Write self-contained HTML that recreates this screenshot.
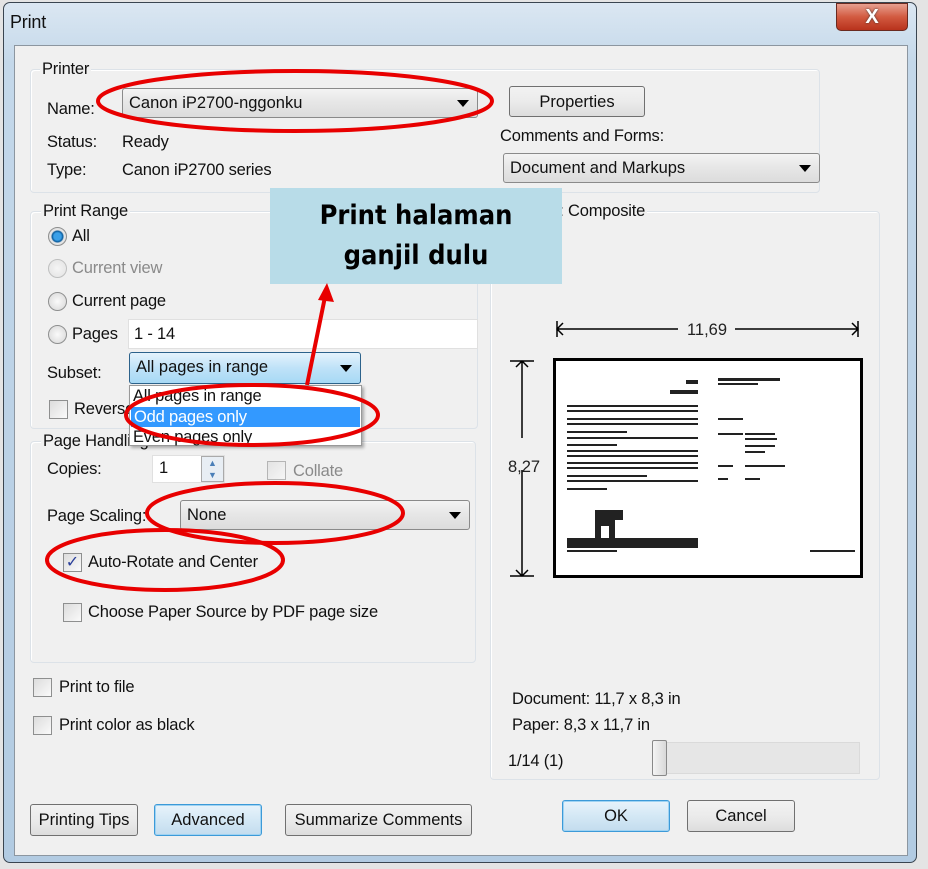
<!DOCTYPE html>
<html><head><meta charset="utf-8"><style>
*{box-sizing:border-box}
body{margin:0;width:928px;height:869px;overflow:hidden;background:#e4e4e4;font-family:"Liberation Sans",sans-serif;font-size:16px;color:#111;position:relative}
.a{position:absolute}
.frame{left:3px;top:2px;width:914px;height:861px;border:1px solid #3a4550;border-radius:7px;background:linear-gradient(#dbe7f2,#c4d8ea 60px,#b2cbe2);}
.bodyp{left:14px;top:45px;width:894px;height:811px;background:#f0f0f0;border:1px solid #8c96a0}
.grp{border:1px solid #dce2e8;border-radius:4px;box-shadow:inset 1px 1px 0 #fff}
.lbl{background:#f0f0f0;padding:0 2px}
.dd{border:1px solid #8a8a8a;border-radius:3px;background:linear-gradient(#f4f4f4,#e6e6e6 50%,#dcdcdc);padding:5px 6px;font-size:16.5px}
.dd:after{content:"";position:absolute;right:8px;top:50%;margin-top:-3px;border:6px solid transparent;border-top:7px solid #000;border-bottom:0}
.btn{border:1px solid #707070;border-radius:3px;background:linear-gradient(#f2f2f2,#ebebeb 50%,#dddddd);text-align:center;font-size:16.5px;line-height:30px}
.btnb{border:1px solid #3c9ad8;border-radius:3px;background:linear-gradient(#e8f3fb,#d4e8f5 50%,#c3dcee);text-align:center;font-size:16.5px;line-height:30px;box-shadow:inset 0 0 0 1px #9fd3f3}
.cb{width:19px;height:19px;border:1px solid #8e8f8f;background:linear-gradient(135deg,#dcdcdc,#fafafa)}
.rd{width:19px;height:19px;border:1px solid #8e8f8f;border-radius:50%;background:radial-gradient(#fafafa,#d6d6d6)}
.t{font-size:16.5px;white-space:nowrap;letter-spacing:-0.2px}
</style></head><body>
<div class="a frame"></div>
<div class="a t" style="left:10px;top:12px;font-size:18px">Print</div>
<div class="a" style="left:836px;top:3px;width:72px;height:28px;border:1px solid #6a2a20;border-radius:0 0 5px 5px;background:linear-gradient(#e8a090,#d25a40 50%,#b8321c);color:#fff;font-weight:bold;font-size:20px;text-align:center;line-height:26px;text-shadow:0 0 2px #333">X</div>
<div class="a bodyp"></div>

<div class="a grp" style="left:30px;top:69px;width:790px;height:124px"></div>
<div class="a t lbl" style="left:40px;top:60px">Printer</div>
<div class="a t" style="left:47px;top:100px">Name:</div>
<div class="a dd" style="left:122px;top:88px;width:356px;height:30px">Canon iP2700-nggonku</div>
<div class="a t" style="left:47px;top:133px">Status:</div><div class="a t" style="left:122px;top:133px">Ready</div>
<div class="a t" style="left:47px;top:161px">Type:</div><div class="a t" style="left:122px;top:161px">Canon iP2700 series</div>
<div class="a btn" style="left:509px;top:86px;width:136px;height:31px">Properties</div>
<div class="a t" style="left:500px;top:127px">Comments and Forms:</div>
<div class="a dd" style="left:503px;top:153px;width:317px;height:30px">Document and Markups</div>

<div class="a grp" style="left:30px;top:211px;width:448px;height:218px"></div>
<div class="a t lbl" style="left:41px;top:202px">Print Range</div>
<div class="a rd" style="left:48px;top:227px;background:radial-gradient(#3aa0e8 30%,#0a5a9a 45%,#e8e8e8 55%,#ccc)"></div><div class="a t" style="left:72px;top:227px">All</div>
<div class="a rd" style="left:48px;top:259px;opacity:.5"></div><div class="a t" style="left:72px;top:259px;color:#8a8a8a">Current view</div>
<div class="a rd" style="left:48px;top:292px"></div><div class="a t" style="left:72px;top:292px">Current page</div>
<div class="a rd" style="left:48px;top:325px"></div><div class="a t" style="left:72px;top:325px">Pages</div>
<div class="a" style="left:128px;top:319px;width:350px;height:30px;background:#fff;border:1px solid #e0e0e0"></div>
<div class="a t" style="left:134px;top:325px">1 - 14</div>
<div class="a t" style="left:47px;top:364px">Subset:</div>
<div class="a dd" style="left:129px;top:352px;width:232px;height:32px;border-color:#2c628b;background:linear-gradient(#e4f3fc,#bfe2f8 50%,#a7d9f5)">All pages in range</div>
<div class="a cb" style="left:49px;top:400px"></div><div class="a t" style="left:74px;top:400px">Reverse</div>

<div class="a grp" style="left:30px;top:441px;width:446px;height:222px"></div>
<div class="a t lbl" style="left:41px;top:432px">Page Handling</div>
<div class="a t" style="left:47px;top:460px">Copies:</div>
<div class="a" style="left:152px;top:455px;width:73px;height:28px;background:#fff;border:1px solid #e0e0e0"></div>
<div class="a t" style="left:159px;top:459px">1</div>
<div class="a" style="left:201px;top:456px;width:23px;height:26px;border:1px solid #aaa;background:#e8eef4;font-size:9px;color:#4a7fb8;text-align:center;line-height:12px">▲<br>▼</div>
<div class="a cb" style="left:267px;top:461px;opacity:.6"></div><div class="a t" style="left:293px;top:462px;color:#8a8a8a">Collate</div>
<div class="a t" style="left:47px;top:507px">Page Scaling:</div>
<div class="a dd" style="left:180px;top:500px;width:290px;height:30px">None</div>
<div class="a cb" style="left:63px;top:553px;text-align:center;font-size:16px;line-height:17px;color:#2a3f9a">✓</div><div class="a t" style="left:88px;top:553px">Auto-Rotate and Center</div>
<div class="a cb" style="left:63px;top:603px"></div><div class="a t" style="left:88px;top:603px">Choose Paper Source by PDF page size</div>

<div class="a cb" style="left:33px;top:678px"></div><div class="a t" style="left:59px;top:678px">Print to file</div>
<div class="a cb" style="left:33px;top:716px"></div><div class="a t" style="left:59px;top:716px">Print color as black</div>

<div class="a" style="left:129px;top:385px;width:233px;height:61px;background:#fff;border:1px solid #999;box-shadow:2px 2px 3px rgba(0,0,0,.3)"></div>
<div class="a t" style="left:133px;top:387px">All pages in range</div>
<div class="a t" style="left:131px;top:407px;width:229px;height:20px;background:#3399ff;color:#fff;padding-left:3px;line-height:20px">Odd pages only</div>
<div class="a t" style="left:133px;top:428px">Even pages only</div>

<div class="a grp" style="left:490px;top:211px;width:390px;height:569px"></div>
<div class="a t lbl" style="left:500px;top:202px">Preview: Composite</div>
<svg class="a" style="left:500px;top:310px" width="380" height="280">
<g stroke="#000" stroke-width="1.5" fill="none">
<path d="M57 19H178M235 19H358M57 11V27M358 11V27M63 13L57 19L63 25M352 13L358 19L352 25"/>
<path d="M10 51H34M10 266H34M22 51V128M22 160V266M16 57L22 51L28 57M16 260L22 266L28 260"/>
</g>
<text x="207" y="25" font-size="16.5" text-anchor="middle" fill="#222" font-family="Liberation Sans">11,69</text>
<text x="24" y="162" font-size="16.5" text-anchor="middle" fill="#222" font-family="Liberation Sans">8,27</text>
<rect x="54.5" y="49.5" width="307" height="217" fill="#fff" stroke="#000" stroke-width="3"/>
<g fill="#222">
<rect x="186" y="70" width="12" height="4"/><rect x="170" y="80" width="28" height="4"/>
<rect x="218" y="68" width="62" height="3"/><rect x="218" y="73" width="40" height="2"/>
<rect x="67" y="95" width="131" height="2"/><rect x="67" y="100" width="131" height="2"/><rect x="67" y="108" width="131" height="2"/><rect x="67" y="113" width="131" height="2"/><rect x="67" y="121" width="60" height="2"/><rect x="67" y="127" width="131" height="2"/><rect x="67" y="134" width="50" height="2"/><rect x="67" y="140" width="131" height="2"/><rect x="67" y="145" width="131" height="2"/><rect x="67" y="152" width="131" height="2"/><rect x="67" y="157" width="131" height="2"/><rect x="67" y="165" width="80" height="2"/><rect x="67" y="170" width="131" height="2"/><rect x="67" y="178" width="40" height="2"/>
<rect x="218" y="108" width="25" height="2"/><rect x="218" y="123" width="25" height="2"/><rect x="245" y="123" width="30" height="2"/><rect x="245" y="128" width="32" height="2"/><rect x="245" y="135" width="30" height="2"/><rect x="245" y="141" width="20" height="2"/><rect x="218" y="155" width="15" height="2"/><rect x="245" y="155" width="40" height="2"/><rect x="218" y="168" width="10" height="2"/><rect x="245" y="168" width="15" height="2"/>
<path d="M95 200h28v10h-8v20h-6v-14h-8v14h-6z"/><rect x="67" y="228" width="131" height="10"/>
<rect x="67" y="240" width="50" height="2"/><rect x="310" y="240" width="45" height="2"/>
</g>
</svg>
<div class="a" style="left:652px;top:742px;width:208px;height:32px;background:#e6e6e6;border:1px solid #dadada"></div>
<div class="a" style="left:652px;top:740px;width:15px;height:36px;background:linear-gradient(90deg,#f4f4f4,#d8d8d8);border:1px solid #888;border-radius:2px"></div>
<div class="a t" style="left:512px;top:690px">Document: 11,7 x 8,3 in</div>
<div class="a t" style="left:512px;top:716px">Paper: 8,3 x 11,7 in</div>
<div class="a t" style="left:508px;top:752px">1/14 (1)</div>

<div class="a btn" style="left:30px;top:804px;width:108px;height:32px">Printing Tips</div>
<div class="a btnb" style="left:154px;top:804px;width:108px;height:32px">Advanced</div>
<div class="a btn" style="left:285px;top:804px;width:187px;height:32px">Summarize Comments</div>
<div class="a btnb" style="left:562px;top:800px;width:108px;height:32px">OK</div>
<div class="a btn" style="left:687px;top:800px;width:108px;height:32px">Cancel</div>

<div class="a" style="left:270px;top:188px;width:292px;height:96px;background:#b8dce8;text-align:center;font-weight:bold;font-size:27px;line-height:40px;padding-top:8px;color:#000;font-family:'DejaVu Sans Condensed','Liberation Sans',sans-serif">Print halaman<br>ganjil dulu</div>

<svg class="a" style="left:0;top:0" width="928" height="869">
<g fill="none" stroke="#e80000" stroke-width="4">
<ellipse cx="295" cy="101" rx="197" ry="30"/>
<ellipse cx="252" cy="415" rx="126" ry="30"/>
<ellipse cx="275" cy="513" rx="128" ry="30"/>
<ellipse cx="165" cy="560" rx="118" ry="30"/>
<path d="M307 385L326 292"/>
</g>
<path d="M327 283L318 300L334 302Z" fill="#e80000"/>
</svg>
</body></html>
